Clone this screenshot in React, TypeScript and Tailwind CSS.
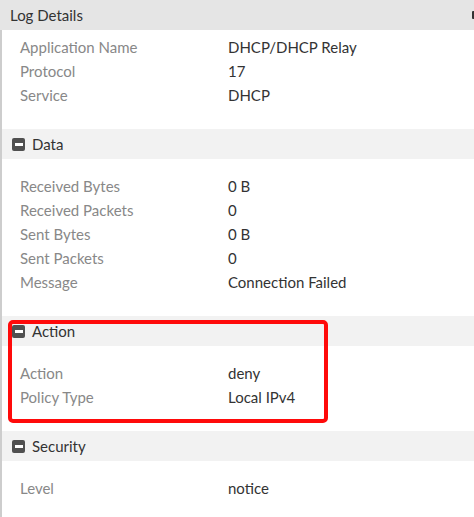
type Row = { label: string; value: string };

type Section = { title: string; rows: Row[]; highlight?: boolean };

const topRows: Row[] = [
  { label: "Application Name", value: "DHCP/DHCP Relay" },
  { label: "Protocol", value: "17" },
  { label: "Service", value: "DHCP" },
];

const sections: Section[] = [
  {
    title: "Data",
    rows: [
      { label: "Received Bytes", value: "0 B" },
      { label: "Received Packets", value: "0" },
      { label: "Sent Bytes", value: "0 B" },
      { label: "Sent Packets", value: "0" },
      { label: "Message", value: "Connection Failed" },
    ],
  },
  {
    title: "Action",
    highlight: true,
    rows: [
      { label: "Action", value: "deny" },
      { label: "Policy Type", value: "Local IPv4" },
    ],
  },
  {
    title: "Security",
    rows: [{ label: "Level", value: "notice" }],
  },
];

const MinusIcon = () => (
  <span className="flex h-[13px] w-[13px] items-center justify-center rounded-[2px] bg-[#505050]">
    <span className="h-[3px] w-[8px] bg-white" />
  </span>
);

const Rows = ({ rows }: { rows: Row[] }) => (
  <div className="flex flex-col">
    {rows.map((row) => (
      <div key={row.label} className="flex h-6 items-center">
        <span className="w-[226px] pl-[18px] text-[#888]">{row.label}</span>
        <span className="text-[#333]">{row.value}</span>
      </div>
    ))}
  </div>
);

const App = () => {
  return (
    <div className="h-[517px] w-[474px] overflow-hidden bg-white font-['Lato','Liberation_Sans',sans-serif] text-[15px]">
      <div className="flex h-[30px] items-center justify-between bg-[#e5e5e5] pl-[10px]">
        <span className="text-[#333]">Log Details</span>
        <span className="mr-[-4px] h-[8px] w-[6px] rounded-[1px] bg-[#333]" />
      </div>

      <div className="border-l-2 border-[#cdcdcd]">
        <div className="pt-[5px] pb-[22px]">
          <Rows rows={topRows} />
        </div>

        {sections.map((section) => (
          <div key={section.title} className="relative">
            <div className="flex h-[30px] items-center gap-[7px] bg-[#f2f2f2] pl-[10px]">
              <MinusIcon />
              <span className="text-[#333]">{section.title}</span>
            </div>
            <div className="pt-[15px] pb-[22px]">
              <Rows rows={section.rows} />
            </div>
            {section.highlight && (
              <div className="absolute top-[4px] left-[6px] h-[103px] w-[320px] rounded-[5px] border-4 border-[#ff0a0a]" />
            )}
          </div>
        ))}
      </div>
    </div>
  );
};

export default App;
